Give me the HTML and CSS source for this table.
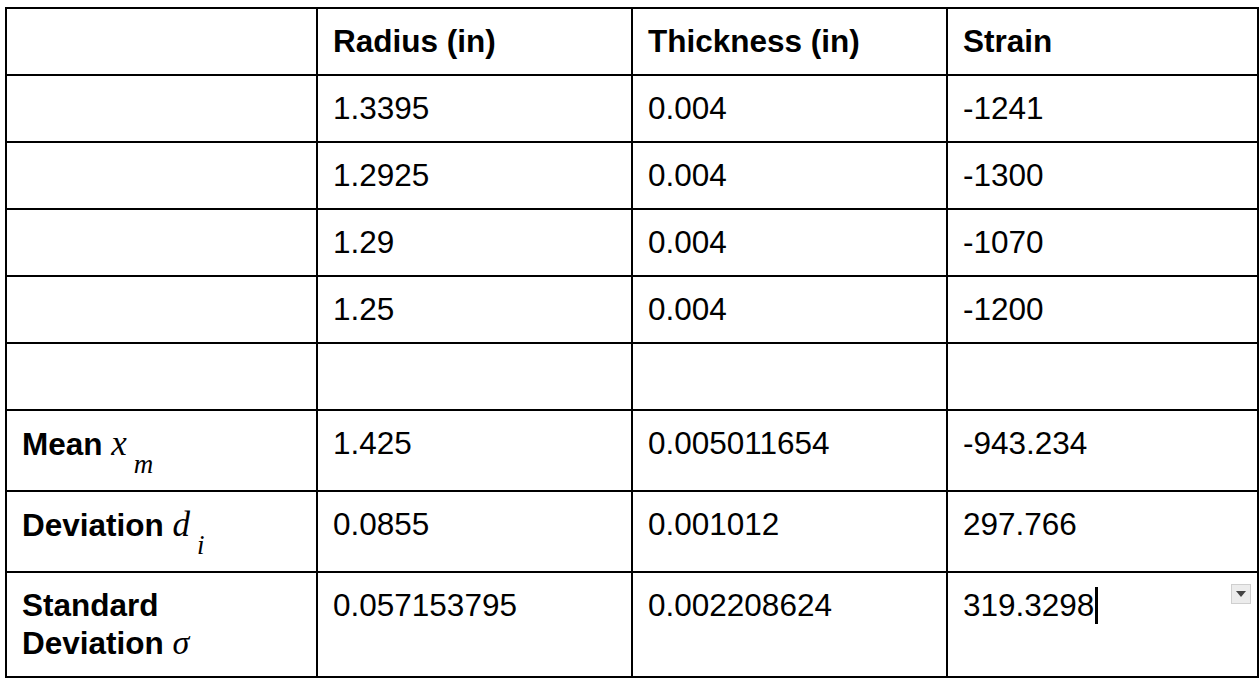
FILE: index.html
```html
<!DOCTYPE html>
<html lang="en">
<head>
<meta charset="utf-8">
<title>Measurements</title>
<link rel="stylesheet" href="styles.css">
</head>
<body>
<div class="page">
  <table class="data">
    <colgroup><col class="c1"><col class="c2"><col class="c3"><col class="c4"></colgroup>
    <thead>
      <tr>
        <th></th>
        <th>Radius (in)</th>
        <th>Thickness (in)</th>
        <th>Strain</th>
      </tr>
    </thead>
    <tbody>
      <tr><td></td><td>1.3395</td><td>0.004</td><td>-1241</td></tr>
      <tr><td></td><td>1.2925</td><td>0.004</td><td>-1300</td></tr>
      <tr><td></td><td>1.29</td><td>0.004</td><td>-1070</td></tr>
      <tr><td></td><td>1.25</td><td>0.004</td><td>-1200</td></tr>
      <tr><td></td><td></td><td></td><td></td></tr>
      <tr>
        <td><b>Mean</b> <span class="math">x<span class="sub">m</span></span></td>
        <td>1.425</td><td>0.005011654</td><td>-943.234</td>
      </tr>
      <tr>
        <td><b>Deviation</b> <span class="math">d<span class="sub">i</span></span></td>
        <td>0.0855</td><td>0.001012</td><td>297.766</td>
      </tr>
      <tr>
        <td><b>Standard Deviation</b> <span class="math sigma">σ</span></td>
        <td>0.057153795</td><td>0.002208624</td>
        <td class="active">319.3298<span class="caret"></span><span class="dropdown"><svg width="10" height="6" viewBox="0 0 10 6"><path d="M0 0H10L5 6Z" fill="#444"/></svg></span></td>
      </tr>
    </tbody>
  </table>
</div>
</body>
</html>
```

FILE: styles.css
```css
html, body {
  margin: 0;
  padding: 0;
  background: #fff;
}

.page {
  padding: 7px 0 0 5px;
}

.data {
  border-collapse: collapse;
  table-layout: fixed;
  width: 1252px;
  font-family: "Liberation Sans", Arial, sans-serif;
  font-size: 31.5px;
  line-height: 37px;
  color: #000;
}

.data .c1 { width: 311px; }
.data .c2 { width: 315px; }
.data .c3 { width: 315px; }
.data .c4 { width: 311px; }

.data th,
.data td {
  border: 2px solid #000;
  padding: 14px 14px 14px 15px;
  vertical-align: top;
  text-align: left;
  font-weight: normal;
  height: 37px;
}

.data th {
  font-weight: bold;
}

.data b {
  font-weight: bold;
}

.math {
  font-family: "Liberation Serif", "Times New Roman", serif;
  font-style: italic;
  font-size: 35px;
}

.sigma {
  font-size: 34px;
}

.sub {
  font-size: 27px;
  line-height: 24px;
  vertical-align: -18px;
  margin-left: 7px;
}

.active {
  position: relative;
}

.caret {
  display: inline-block;
  width: 3px;
  height: 37px;
  background: #000;
  vertical-align: top;
  margin-left: 1px;
}

.dropdown {
  position: absolute;
  top: 11px;
  right: 6px;
  width: 18px;
  height: 18px;
  background: #ececec;
  border: 1px solid #cfcfcf;
  display: flex;
  align-items: center;
  justify-content: center;
}

.dropdown svg {
  display: block;
}
```
